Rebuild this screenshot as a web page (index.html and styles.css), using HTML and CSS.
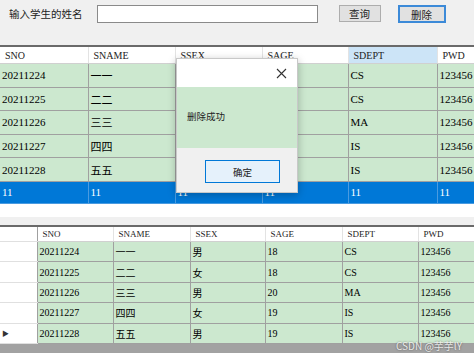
FILE: index.html
```html
<!DOCTYPE html>
<html lang="zh-CN">
<head>
    <meta charset="UTF-8">
    <title>学生信息</title>
    <link rel="stylesheet" href="styles.css">
</head>
<body>
    <div class="toolbar">
        <span class="label">输入学生的姓名</span>
        <input class="name-input" type="text">
        <button class="btn query">查询</button>
        <button class="btn delete">删除</button>
    </div>

    <div class="grid-one">
        <table class="grid">
            <colgroup>
                <col style="width:88px"><col style="width:87px"><col style="width:87px">
                <col style="width:86px"><col style="width:89px"><col style="width:60px">
            </colgroup>
            <thead>
                <tr><th>SNO</th><th>SNAME</th><th>SSEX</th><th>SAGE</th><th class="sorted">SDEPT</th><th>PWD</th></tr>
            </thead>
            <tbody>
                <tr><td>20211224</td><td>一一</td><td></td><td></td><td>CS</td><td>123456</td></tr>
                <tr><td>20211225</td><td>二二</td><td></td><td></td><td>CS</td><td>123456</td></tr>
                <tr><td>20211226</td><td>三三</td><td></td><td></td><td>MA</td><td>123456</td></tr>
                <tr><td>20211227</td><td>四四</td><td></td><td></td><td>IS</td><td>123456</td></tr>
                <tr><td>20211228</td><td>五五</td><td></td><td></td><td>IS</td><td>123456</td></tr>
                <tr class="selected"><td>11</td><td>11</td><td>11</td><td>11</td><td>11</td><td>11</td></tr>
            </tbody>
        </table>
    </div>

    <div class="spacer"></div>

    <div class="grid-two">
        <table class="grid small">
            <colgroup>
                <col style="width:37px"><col style="width:76px"><col style="width:77px"><col style="width:75px">
                <col style="width:77px"><col style="width:76px"><col style="width:56px">
            </colgroup>
            <thead>
                <tr><th class="rowhead"></th><th>SNO</th><th>SNAME</th><th>SSEX</th><th>SAGE</th><th>SDEPT</th><th>PWD</th></tr>
            </thead>
            <tbody>
                <tr><td class="rowhead"></td><td>20211224</td><td>一一</td><td>男</td><td>18</td><td>CS</td><td>123456</td></tr>
                <tr><td class="rowhead"></td><td>20211225</td><td>二二</td><td>女</td><td>18</td><td>CS</td><td>123456</td></tr>
                <tr><td class="rowhead"></td><td>20211226</td><td>三三</td><td>男</td><td>20</td><td>MA</td><td>123456</td></tr>
                <tr><td class="rowhead"></td><td>20211227</td><td>四四</td><td>女</td><td>19</td><td>IS</td><td>123456</td></tr>
                <tr><td class="rowhead current">&#9654;</td><td>20211228</td><td>五五</td><td>男</td><td>19</td><td>IS</td><td>123456</td></tr>
            </tbody>
        </table>
        <div class="grid-bottom"></div>
    </div>

    <div class="dialog">
        <div class="dialog-head">
            <svg class="close" width="11" height="11" viewBox="0 0 11 11">
                <path d="M1 1L10 10M10 1L1 10" stroke="#333" stroke-width="1.1" fill="none"/>
            </svg>
        </div>
        <div class="dialog-body">删除成功</div>
        <div class="dialog-foot">
            <button class="btn ok">确定</button>
        </div>
    </div>

    <div class="watermark">CSDN @芋芋lY</div>
</body>
</html>
```

FILE: styles.css
```css
body {
    margin: 0;
    width: 474px;
    height: 353px;
    overflow: hidden;
    position: relative;
    background-color: #f0f0f0;
    font-family: "Liberation Serif", "Noto Sans CJK SC", serif;
    font-size: 11px;
    color: #000;
}
.toolbar {
    height: 45px;
    display: flex;
    align-items: flex-start;
    padding-top: 5px;
    box-sizing: border-box;
    font-family: "Noto Sans CJK SC", sans-serif;
}
.label {
    margin-left: 9px;
    margin-top: 1px;
    font-size: 10.5px;
    color: #222;
}
.name-input {
    margin-left: 14px;
    width: 221px;
    height: 18px;
    box-sizing: border-box;
    border: 1px solid #8a8a8a;
    background: #fff;
    padding: 0;
}
.btn {
    font-family: "Noto Sans CJK SC", sans-serif;
    font-size: 10.5px;
    color: #222;
    background-color: #e1e1e1;
    border: 1px solid #adadad;
    padding: 0;
    box-sizing: border-box;
}
.query {
    margin-left: 21px;
    width: 42px;
    height: 17px;
}
.delete {
    margin-left: 17px;
    width: 48px;
    height: 18px;
    border: 2px solid #3c8ad8;
}
.grid-one {
    height: 170px;
    border-top: 2px solid #6a6a6a;
    background-color: #fff;
    overflow: hidden;
}
.grid {
    border-collapse: collapse;
    table-layout: fixed;
    width: 497px;
}
.grid th {
    height: 16px;
    padding: 0 0 0 5px;
    font-weight: normal;
    text-align: left;
    background-color: #fff;
    border-right: 1px solid #e3e3e3;
    border-bottom: 1px solid #d0d0d0;
    color: #222;
    font-size: 10px;
}
.grid th.sorted {
    background-color: #cce4f7;
}
.grid td {
    height: 22.6px;
    padding: 0 0 0 2px;
    background-color: #cce8cf;
    border: 1px solid #a0a0a0;
    border-top: none;
    border-left: none;
    white-space: nowrap;
    overflow: hidden;
}
.grid tr.selected td {
    background-color: #0078d7;
    color: #fff;
    border-color: #4a9be0;
    height: 21px;
}
.spacer {
    height: 8px;
}
.grid-two {
    border-top: 2px solid #6a6a6a;
    background-color: #fff;
}
.grid.small {
    width: 474px;
}
.grid.small th {
    height: 14px;
    font-size: 9px;
}
.grid.small td {
    height: 19.4px;
    font-size: 10px;
}
.grid.small .rowhead {
    background-color: #fff;
    border-right: 1px solid #a0a0a0;
    border-bottom: 1px solid #e0e0e0;
    font-size: 7px;
    color: #333;
}
.grid-bottom {
    height: 12px;
    background-color: #a2a2a2;
}
.dialog {
    position: absolute;
    left: 176px;
    top: 58px;
    width: 122px;
    height: 135px;
    display: flex;
    flex-direction: column;
    border: 1px solid #c8c8c8;
    box-sizing: border-box;
    box-shadow: 0 2px 8px rgba(0, 0, 0, 0.25);
    font-family: "Noto Sans CJK SC", sans-serif;
}
.dialog-head {
    height: 28px;
    background-color: #fff;
    display: flex;
    justify-content: flex-end;
    align-items: center;
}
.close {
    margin-right: 10px;
}
.dialog-body {
    height: 61px;
    background-color: #cce8cf;
    display: flex;
    align-items: center;
    padding-left: 10px;
    padding-bottom: 3px;
    box-sizing: border-box;
    font-size: 9.5px;
    color: #222;
}
.dialog-foot {
    flex: 1;
    background-color: #f0f0f0;
    display: flex;
    justify-content: flex-end;
    align-items: flex-start;
    padding-top: 12px;
    padding-right: 17px;
}
.ok {
    width: 75px;
    height: 23px;
    background-color: #e5f1fb;
    border: 1px solid #0078d7;
    font-size: 9.5px;
}
.watermark {
    position: absolute;
    right: 12px;
    bottom: 0;
    font-family: "Noto Sans CJK SC", sans-serif;
    font-size: 10px;
    color: rgba(255, 255, 255, 0.85);
    text-shadow: 0 0 2px rgba(0, 0, 0, 0.5);
}
```
